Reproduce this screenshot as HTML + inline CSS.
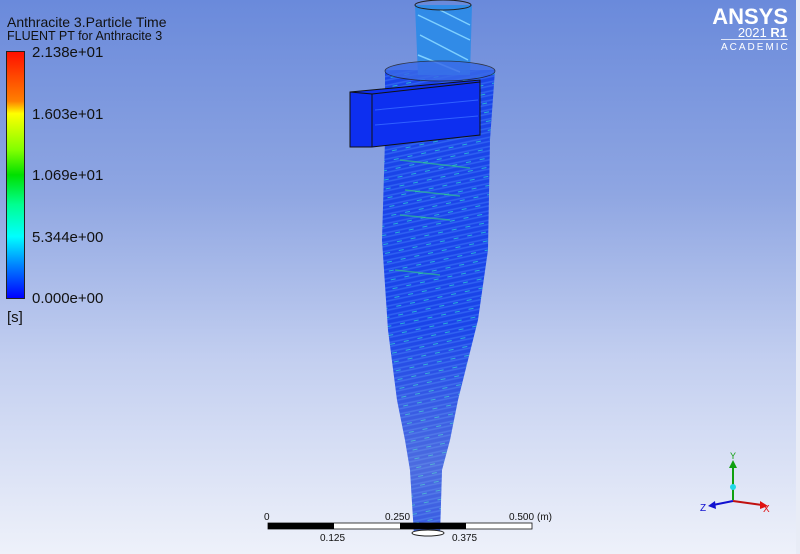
<!DOCTYPE html><html><head><style>
body{margin:0;width:800px;height:554px;overflow:hidden;background:linear-gradient(#6a8adb 0%,#8fa6e2 35%,#c3cff0 65%,#eef1fa 100%);font-family:"Liberation Sans",sans-serif;position:relative}
.t{position:absolute;color:#111;white-space:nowrap}
</style></head><body>
<div style="position:absolute;right:0;top:0;width:4px;height:554px;background:#e8ecf6"></div>
<div class="t" style="left:7px;top:14px;font-size:14px">Anthracite 3.Particle Time</div>
<div class="t" style="left:7px;top:29px;font-size:12.5px">FLUENT PT for Anthracite 3</div>
<div style="position:absolute;left:6px;top:51px;width:17px;height:246px;border:1px solid #222;background:linear-gradient(#ff1000,#ff8000 20%,#ffff00 25%,#80ff00 40%,#00e000 50%,#00ff90 62%,#00ffff 75%,#0080ff 87%,#0000ff)"></div>
<div class="t" style="left:32px;top:44px;font-size:15px">2.138e+01</div>
<div class="t" style="left:32px;top:106px;font-size:15px">1.603e+01</div>
<div class="t" style="left:32px;top:167px;font-size:15px">1.069e+01</div>
<div class="t" style="left:32px;top:229px;font-size:15px">5.344e+00</div>
<div class="t" style="left:32px;top:290px;font-size:15px">0.000e+00</div>
<div class="t" style="left:7px;top:309px;font-size:15px">[s]</div>
<div class="t" style="right:12px;top:4px;font-size:22px;font-weight:bold;color:#fff">ANSYS</div>
<div class="t" style="right:13px;top:25px;font-size:13px;color:#fff">2021 <b>R1</b></div>
<div style="position:absolute;left:721px;top:39px;width:67px;border-top:1px solid #dfe6f8"></div>
<div class="t" style="left:721px;top:42px;font-size:10px;letter-spacing:2px;color:#fff">ACADEMIC</div>
<svg width="800" height="554" style="position:absolute;left:0;top:0">
<defs><pattern id="st" width="14" height="9" patternUnits="userSpaceOnUse" patternTransform="rotate(-12)"><rect width="14" height="9" fill="#1a44e8"/><path d="M0 2H14M0 6H14" stroke="#2f62f2" stroke-width="1.4"/><path d="M2 4H7" stroke="#28b0d8" stroke-width="1"/></pattern>
<linearGradient id="gr" x1="0" y1="0" x2="0" y2="1" gradientUnits="objectBoundingBox"><stop offset="0.55" stop-color="#a8b4d0" stop-opacity="0"/><stop offset="0.85" stop-color="#a8b4d0" stop-opacity="0.35"/><stop offset="1" stop-color="#a8b4d0" stop-opacity="0.2"/></linearGradient></defs>
<path id="b" d="M385 70 L495 70 L490 140 L488 250 L478 320 L458 400 L450 440 L442 470 L440 535 L414 535 L410 470 L405 440 L397 400 L388 330 L382 240 L385 140 Z" fill="url(#st)"/>
<path d="M385 70 L495 70 L490 140 L488 250 L478 320 L458 400 L450 440 L442 470 L440 535 L414 535 L410 470 L405 440 L397 400 L388 330 L382 240 L385 140 Z" fill="url(#gr)"/>
<path d="M400 160 L470 168 M405 190 L460 196 M400 215 L450 220 M395 270 L440 275" stroke="#30d080" stroke-width="1.5" opacity=".6"/>
<path d="M415 5 L472 5 L470 75 L418 75Z" fill="#2a8be8" opacity=".9"/>
<path d="M418 15 L470 40 M420 35 L468 60 M418 55 L460 72 M440 10 L470 25" stroke="#7fd0ff" stroke-width="1.5" fill="none"/>
<ellipse cx="443" cy="5" rx="28" ry="5" fill="none" stroke="#222"/>
<ellipse cx="440" cy="71" rx="55" ry="10" fill="#3a6ae8" stroke="#222" stroke-width="0.8" opacity=".8"/>
<path d="M350 92 L480 80 L480 135 L372 147 L350 147 Z" fill="#0d2ff0" stroke="#111"/>
<path d="M350 92 L372 94 L372 147 M372 94 L480 82" stroke="#111" fill="none"/>
<path d="M375 110 L478 100 M375 125 L478 116" stroke="#3060ff" fill="none"/>
<ellipse cx="428" cy="533" rx="16" ry="3" fill="#fff" stroke="#222"/>
<rect x="268" y="523" width="264" height="6" fill="#fff" stroke="#111" stroke-width="0.8"/>
<rect x="268" y="523" width="66" height="6" fill="#000"/><rect x="400" y="523" width="66" height="6" fill="#000"/>
<g font-family="Liberation Sans" font-size="10" fill="#111"><text x="264" y="520">0</text><text x="385" y="520">0.250</text><text x="509" y="520">0.500</text><text x="537" y="520">(m)</text><text x="320" y="541">0.125</text><text x="452" y="541">0.375</text></g>
<path d="M733 500V466" stroke="#10a010" stroke-width="2"/><path d="M729 468L733 460L737 468Z" fill="#10a010"/>
<text x="730" y="459" font-size="9" fill="#10a010" font-family="Liberation Sans">Y</text>
<path d="M733 501L762 505" stroke="#c01010" stroke-width="2"/><path d="M760 501L768 506L760 509Z" fill="#e01010"/>
<text x="763" y="512" font-size="10" fill="#e01010" font-family="Liberation Sans">X</text>
<path d="M733 501L713 505" stroke="#1010d0" stroke-width="2"/><path d="M715 501L708 506L716 509Z" fill="#1010d0"/>
<text x="700" y="511" font-size="10" fill="#1010d0" font-family="Liberation Sans">Z</text>
<circle cx="733" cy="487" r="3" fill="#20d8e8"/>
</svg>
</body></html>
